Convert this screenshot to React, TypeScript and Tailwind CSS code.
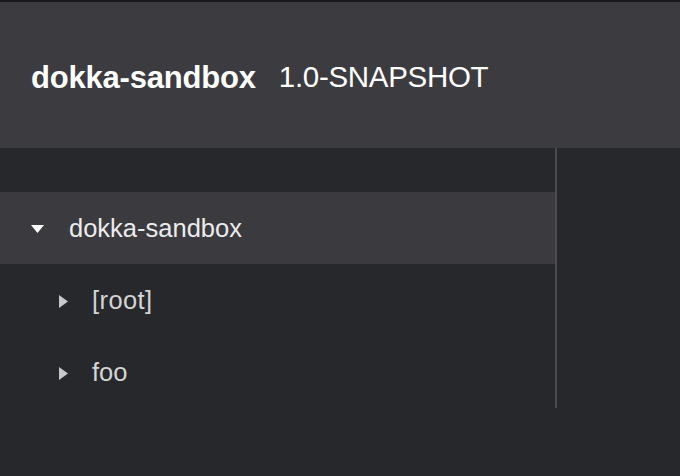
export default function App() {
  const font = { fontFamily: '"Liberation Sans", Arial, sans-serif' };
  return (
    <div className="w-[680px] h-[476px] bg-[#27282c] overflow-hidden flex flex-col" style={font}>
      <div className="h-[2px] bg-[#19191c]" />
      <header className="h-[146px] bg-[#3c3b40] flex items-center pl-[31px] pt-[4px]">
        <span className="text-[31px] font-bold text-white tracking-[-0.2px] leading-none">dokka-sandbox</span>
        <span className="text-[29.5px] text-white ml-[23px] tracking-[-0.3px] leading-none">1.0-SNAPSHOT</span>
      </header>
      <div className="flex">
        <nav className="w-[555px] pt-[44px]">
          <div className="h-[72px] bg-[#3b3a3f] flex items-center pt-[2px]">
            <svg width="13" height="8" viewBox="0 0 13 8" className="ml-[31px]">
              <polygon points="0,0 13,0 6.5,8" fill="#ffffff" />
            </svg>
            <span className="ml-[25px] text-[25.5px] text-[#ececec] leading-none">dokka-sandbox</span>
          </div>
          <div className="h-[72px] flex items-center pt-[2px]">
            <svg width="9" height="13" viewBox="0 0 9 13" className="ml-[59px]">
              <polygon points="0,0 9,6.5 0,13" fill="#c8c8c8" />
            </svg>
            <span className="ml-[24px] text-[25.5px] text-[#d4d4d4] leading-none tracking-[0.4px]">[root]</span>
          </div>
          <div className="h-[72px] flex items-center pt-[2px]">
            <svg width="9" height="13" viewBox="0 0 9 13" className="ml-[59px]">
              <polygon points="0,0 9,6.5 0,13" fill="#c8c8c8" />
            </svg>
            <span className="ml-[24px] text-[25.5px] text-[#d4d4d4] leading-none">foo</span>
          </div>
        </nav>
        <div className="w-[2px] h-[260px] bg-[#4a4b50]" />
        <div className="flex-1" />
      </div>
    </div>
  );
}
